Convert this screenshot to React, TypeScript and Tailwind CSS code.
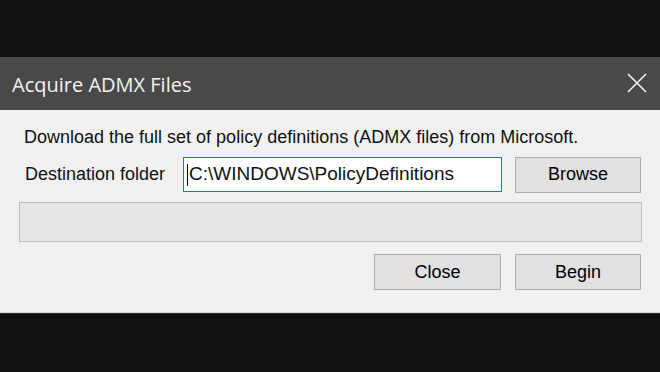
import React from 'react';

const Btn: React.FC<{ label: string; w: string }> = ({ label, w }) => (
  <button className={`${w} h-[36px] bg-[#e1e1e1] border border-[#adadad] text-[18px] text-black flex items-center justify-center`}>
    {label}
  </button>
);

export default function App() {
  return (
    <div className="w-[660px] h-[372px] bg-[#111111] flex flex-col overflow-hidden" style={{ fontFamily: '"Liberation Sans", Arial, sans-serif' }}>
      <div className="h-[57px] shrink-0" />
      <div className="h-[53px] shrink-0 bg-[#494949] flex items-center justify-between pl-[12px] pr-[13px]">
        <span className="text-[20px] text-[#f2f2f2] pt-[3px]" style={{ fontFamily: '"Open Sans", "Noto Sans", sans-serif' }}>Acquire ADMX Files</span>
        <svg width="20" height="20" viewBox="0 0 20 20" className="mb-[2px]">
          <path d="M1 1 L19 19 M19 1 L1 19" stroke="#f2f2f2" strokeWidth="1.6" />
        </svg>
      </div>
      <div className="h-[202px] shrink-0 bg-[#f0f0f0] flex flex-col pl-[19px] pr-[18px]">
        <div className="pl-[5px] pt-[16px] h-[47px] text-[18px] text-[#111] leading-[22px]">
          Download the full set of policy definitions (ADMX files) from Microsoft.
        </div>
        <div className="flex items-center h-[35px]">
          <span className="pl-[6px] w-[164px] text-[18px] text-[#111]">Destination folder</span>
          <div className="w-[319px] h-[35px] bg-white border border-[#2a6fb0] flex items-center pl-[3px] text-[19px] text-[#111]">
            <span className="inline-block w-px h-[22px] bg-black mr-[1px]" />
            <span>C:\WINDOWS\PolicyDefinitions</span>
          </div>
          <div className="ml-[13px]"><Btn label="Browse" w="w-[126px]" /></div>
        </div>
        <div className="mt-[10px] h-[40px] bg-[#e6e6e6] border border-[#bcbcbc]" />
        <div className="mt-[12px] flex justify-end gap-[14px] pr-[1px]">
          <Btn label="Close" w="w-[127px]" />
          <Btn label="Begin" w="w-[126px]" />
        </div>
      </div>
      <div className="h-px bg-[#d8d8d8]" />
      <div className="h-px bg-[#333]" />
    </div>
  );
}
